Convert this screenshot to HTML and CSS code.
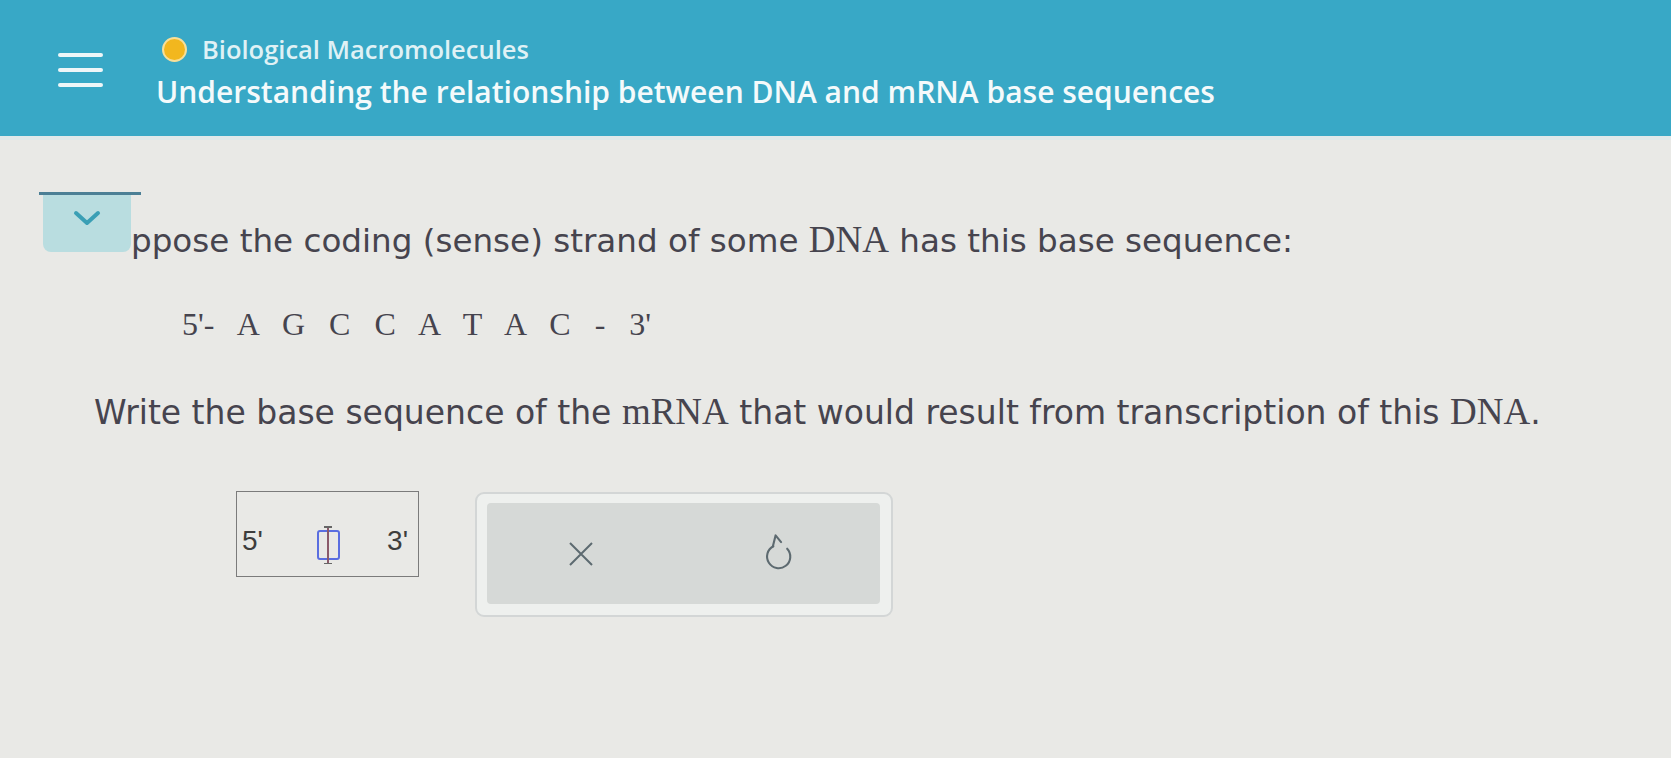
FILE: index.html
```html
<!DOCTYPE html>
<html>
<head>
<meta charset="utf-8">
<link rel="stylesheet" href="styles.css">
</head>
<body>
<header class="topbar">
  <div class="menu">
    <span></span><span></span><span></span>
  </div>
  <div class="titles">
    <div class="topic"><span class="dot"></span>Biological Macromolecules</div>
    <div class="title">Understanding the relationship between DNA and mRNA base sequences</div>
  </div>
</header>
<div class="rule"></div>
<main class="content">
  <div class="qline">
    <div class="tab">
      <svg width="28" height="16" viewBox="0 0 28 16"><path d="M3 3 L14 13 L25 3" fill="none" stroke="#3a9fb5" stroke-width="4" stroke-linecap="round" stroke-linejoin="round"/></svg>
    </div>
    <p class="q">ppose the coding (sense) strand of some <span class="serif">DNA</span> has this base sequence:</p>
  </div>
  <p class="seq">5'- A G C C A T A C - 3'</p>
  <p class="write">Write the base sequence of the <span class="serif">mRNA</span> that would result from transcription of this <span class="serif">DNA</span>.</p>
  <div class="answer-row">
    <div class="answer">
      <span class="end">5'</span>
      <span class="cursor"><span class="caret"></span></span>
      <span class="end">3'</span>
    </div>
    <div class="panel">
      <div class="panel-inner">
        <svg class="icon" width="28" height="28" viewBox="0 0 28 28"><path d="M3 3 L25 25 M25 3 L3 25" stroke="#5d6a70" stroke-width="2" fill="none"/></svg>
        <svg class="icon undo" width="32" height="42" viewBox="0 0 28 38"><path d="M15 10 L10 4 L7.5 14" fill="none" stroke="#5d6a70" stroke-width="1.9" stroke-linejoin="round" stroke-linecap="round"/><path d="M8 13.8 A10.5 10.5 0 1 0 20.5 16" fill="none" stroke="#5d6a70" stroke-width="1.9" stroke-linecap="round"/></svg>
      </div>
    </div>
  </div>
</main>
</body>
</html>
```
FILE: styles.css
```css
html, body {
  margin: 0;
  padding: 0;
}
body {
  width: 1671px;
  height: 758px;
  overflow: hidden;
  background: #e9e9e6;
  font-family: "DejaVu Sans", Verdana, sans-serif;
  color: #46444e;
}
.topbar {
  height: 136px;
  background: #38a8c6;
  display: flex;
  align-items: flex-start;
  box-sizing: border-box;
  padding: 0 0 0 58px;
  font-family: "Open Sans", "Liberation Sans", sans-serif;
}
.menu {
  width: 45px;
  margin-top: 53px;
  display: flex;
  flex-direction: column;
  gap: 11px;
}
.menu span {
  display: block;
  height: 4px;
  background: #eef6f8;
  border-radius: 2px;
}
.titles {
  margin-left: 53px;
  margin-top: 29px;
  display: flex;
  flex-direction: column;
}
.topic {
  display: flex;
  align-items: center;
  font-size: 25.5px;
  font-weight: 600;
  color: #dff1f5;
  height: 40px;
  margin-left: 6px;
}
.dot {
  width: 21px;
  height: 21px;
  border-radius: 50%;
  background: #f2b71e;
  border: 2px solid #f7df99;
  margin-right: 15px;
  margin-left: 0;
}
.title {
  font-size: 30px;
  font-weight: 600;
  color: #f4fafb;
  line-height: 42px;
  margin-top: 2px;
}
.rule {
  height: 4px;
  background: #dfe9ea;
}
.content {
  padding: 52px 0 0 0;
}
.qline {
  display: flex;
  align-items: flex-start;
}
.tab {
  margin-left: 43px;
  width: 88px;
  height: 60px;
  background: #b9dde0;
  border-top: 3px solid #4c7f95;
  border-radius: 0 0 8px 8px;
  box-sizing: border-box;
  display: flex;
  justify-content: center;
  padding-top: 15px;
  position: relative;
}
.tab::before {
  content: "";
  position: absolute;
  top: -3px;
  left: -4px;
  right: -10px;
  height: 3px;
  background: #4c7f95;
}
.q {
  margin: 26px 0 0 0;
  font-size: 32.6px;
  line-height: 44px;
}
.serif {
  font-family: "Liberation Serif", "Times New Roman", serif;
  font-size: 37px;
}
.seq {
  margin: 41px 0 0 182px;
  font-family: "Liberation Serif", "Times New Roman", serif;
  font-size: 32px;
  line-height: 40px;
  word-spacing: 16px;
}
.write {
  margin: 46px 0 0 94px;
  font-size: 33px;
  line-height: 44px;
}
.answer-row {
  display: flex;
  align-items: flex-start;
  margin-top: 56px;
}
.answer {
  margin-left: 236px;
  width: 183px;
  height: 86px;
  border: 1.5px solid #7b7b7b;
  box-sizing: border-box;
  display: flex;
  align-items: center;
  justify-content: space-between;
  padding: 14px 10px 0 5px;
  font-family: "Liberation Sans", sans-serif;
  font-size: 28px;
  color: #3d3d3d;
}
.cursor {
  width: 23px;
  height: 30px;
  border: 2.5px solid #5a6ee0;
  border-radius: 3px;
  box-sizing: border-box;
  margin-left: 16px;
  margin-right: 10px;
  margin-top: 8px;
  position: relative;
}
.caret {
  position: absolute;
  left: 50%;
  top: -6px;
  bottom: -6px;
  width: 1.5px;
  margin-left: -0.75px;
  background: #8a5a6a;
}
.caret::before, .caret::after {
  content: "";
  position: absolute;
  left: -3px;
  width: 7.5px;
  height: 1.5px;
  background: #666;
}
.caret::before { top: 0; }
.caret::after { bottom: 0; }
.panel {
  margin-left: 56px;
  width: 418px;
  height: 125px;
  border: 2px solid #d3d6d6;
  border-radius: 9px;
  background: #eef0ee;
  box-sizing: border-box;
  padding: 9px 11px 11px 10px;
  margin-top: 1px;
}
.panel-inner {
  height: 100%;
  background: #d6d9d7;
  border-radius: 4px;
  display: flex;
  align-items: center;
  padding-left: 80px;
  gap: 169px;
}
.icon {
  display: block;
}
.undo {
  margin-top: -4px;
}
```
